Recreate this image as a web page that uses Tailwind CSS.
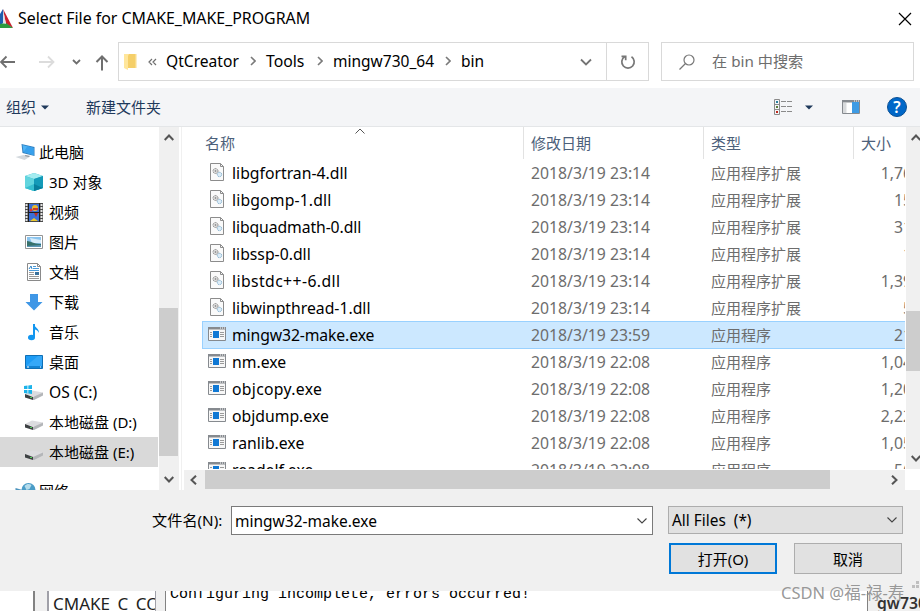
<!DOCTYPE html>
<html lang="zh-CN">

<head>
  <meta charset="UTF-8">
  <meta name="viewport" content="width=device-width, initial-scale=1.0">
  <title>Select File for CMAKE_MAKE_PROGRAM</title>
  <script src="https://cdn.jsdelivr.net/npm/@tailwindcss/browser@4"></script>
</head>

<body class="w-[920px] h-[611px] overflow-hidden bg-white text-black text-[15.75px] leading-5 whitespace-nowrap font-['Noto_Sans','Noto_Sans_CJK_SC',sans-serif]">
  <div class="flex flex-col h-[611px]">

    <!-- Title bar -->
    <header class="flex items-center h-[42px] shrink-0 pb-[5px]">
      <svg class="w-[14px] h-[20px] shrink-0" viewBox="0 0 14 20">
        <path d="M3 0 0 5v11L5 13z" fill="#1d5fae" />
        <path d="M3 0 13 19 6 15z" fill="#c9212e" />
        <path d="M0 15l6-1 7 5H0z" fill="#2c9a3f" />
        <path d="M3 1v13l3 1z" fill="#dfe3e8" />
      </svg>
      <h1 class="ml-1 pb-[2px] text-[15.9px]">Select File for CMAKE_MAKE_PROGRAM</h1>
      <svg class="ml-auto mr-[8px] w-[14px] h-[14px]" viewBox="0 0 14 14" fill="none" stroke="#000" stroke-width="1.2"><path d="M1 1l12 12M13 1 1 13" /></svg>
    </header>

    <!-- Navigation -->
    <nav class="flex h-[46px] shrink-0">
      <div class="flex items-center w-[118px] h-[39px] shrink-0">
        <svg class="w-[118px] h-[39px]" viewBox="0 0 118 39" fill="none" stroke="#6f6f6f" stroke-width="1.8">
          <path d="M15 20H1M6.500 14.500 1 20l5.500 5.500" />
          <path d="M39 20h14M48 14.500l5.500 5.500L48 25.500" stroke="#dcdcdc" />
          <path d="M73 18l3.500 3.500L80 18" />
          <path d="M102 28.500V14.500M96.500 20l5.500-5.500 5.500 5.500" stroke-width="2" />
        </svg>
      </div>
      <div class="flex w-[531px] h-[39px] border border-[#d9d9d9] shrink-0">
        <div class="flex items-center flex-1">
          <svg class="ml-[5px] w-[13px] h-[18px]" viewBox="0 0 13 18">
            <path d="M4 1h8v14H4z" fill="#f5cf69" />
            <path d="M0 1h5l-1 2v14L0 15z" fill="#ffe69b" />
            <path d="M11 1h1.500v14H11z" fill="#f9dc8a" />
          </svg>
          <svg class="ml-[11px] w-[9px] h-[8px]" viewBox="0 0 9 8" fill="none" stroke="#6f6f6f" stroke-width="1.200"><path d="M4 1 1 4l3 3M8 1 5 4l3 3" /></svg>
          <span class="ml-[9px] w-[84px] pb-[2px] text-[15.600px]">QtCreator</span>
          <svg class="w-[6px] h-[10px] mb-[2px]" viewBox="0 0 6 10" fill="none" stroke="#7a7a7a" stroke-width="1.600"><path d="M1 1l4 4-4 4" /></svg>
          <span class="ml-[10px] w-[51px] pb-[2px] text-[15.800px]">Tools</span>
          <svg class="w-[6px] h-[10px] mb-[2px]" viewBox="0 0 6 10" fill="none" stroke="#7a7a7a" stroke-width="1.600"><path d="M1 1l4 4-4 4" /></svg>
          <span class="ml-[10px] w-[112px] pb-[2px] text-[15.500px]">mingw730_64</span>
          <svg class="w-[6px] h-[10px] mb-[2px]" viewBox="0 0 6 10" fill="none" stroke="#7a7a7a" stroke-width="1.600"><path d="M1 1l4 4-4 4" /></svg>
          <span class="ml-[10px] pb-[2px] text-[15.500px]">bin</span>
          <svg class="ml-auto mr-[14px] w-[12px] h-[8px]" viewBox="0 0 12 8" fill="none" stroke="#747474" stroke-width="1.800"><path d="M1 1.500l5 5 5-5" /></svg>
        </div>
        <div class="flex items-center justify-center w-[42px] border-l border-[#d9d9d9]">
          <svg class="w-[16px] h-[16px]" viewBox="0 0 16 16" fill="none" stroke="#777" stroke-width="1.700"><path d="M11.500 2.800A6.200 6.200 0 1 1 4.500 2.800M1.500 2.300h4.200v4" /></svg>
        </div>
      </div>
      <div class="flex items-center ml-[12px] w-[253px] h-[39px] border border-[#d9d9d9] text-[#6d6d6d] shrink-0">
        <svg class="ml-[17px] w-[16px] h-[16px]" viewBox="0 0 16 16" fill="none" stroke="#777" stroke-width="1.200"><circle cx="10" cy="6" r="5" /><path d="M6.500 9.500.5 15.500" /></svg>
        <span class="ml-[17px] pb-[2px] text-[15.2px]">在 bin 中搜索</span>
      </div>
    </nav>

    <!-- Toolbar -->
    <div class="flex items-center h-[39px] shrink-0 bg-[#f4f5f7] border-b border-[#e4e6e8] text-[15px] text-[#1e395b]">
      <span class="ml-[6px] w-[30px]">组织</span>
      <svg class="ml-[5px] w-[8px] h-[5px]" viewBox="0 0 8 5"><path d="M0 .5h8L4 4.500z" fill="#1e395b" /></svg>
      <span class="ml-[37px]">新建文件夹</span>
      <svg class="ml-auto w-[18px] h-[16px]" viewBox="0 0 18 16" fill="none" stroke="#8a8a8a">
        <path d="M.5.5h5v15h-5zM.5 5.500h5M.5 10.500h5M7 2.500h5M13 2.500h5M7 7.500h5M13 7.500h5M7 12.500h5M13 12.500h5" />
        <path d="M2 3h2" stroke="#2a7f9e" stroke-width="2" /><path d="M2 8h2" stroke="#5b7d3a" stroke-width="2" /><path d="M2 13h2" stroke="#c0281c" stroke-width="2" />
      </svg>
      <svg class="ml-[13px] w-[8px] h-[5px]" viewBox="0 0 8 5"><path d="M0 .5h8L4 4.500z" fill="#1e395b" /></svg>
      <svg class="ml-[29px] w-[18px] h-[14px]" viewBox="0 0 18 14">
        <path d="M.5.5h17v13H.5z" fill="#fff" stroke="#868a8f" /><path d="M0 0h18v2.500H0z" fill="#868a8f" />
        <path d="M1 3h3.500v10H1z" fill="#d8dadc" /><path d="M10 2h7v11h-7z" fill="#3e9be4" /><path d="M12 1h1M14 1h1M16 1h1" stroke="#fff" />
      </svg>
      <span class="flex items-center justify-center ml-[27px] mr-[13px] w-[20px] h-[20px] rounded-full bg-[#0067c8] border border-[#0a4f94] text-white text-[16px] font-semibold">?</span>
    </div>

    <!-- Folder tree and file list -->
    <main class="flex h-[363px] shrink-0">
      <aside id="tree" class="w-[158px] h-[363px] pt-[10px] overflow-hidden shrink-0 text-[15px]"></aside>
      <div class="flex flex-col items-center ml-px w-[20px] bg-[#f0f0f0] shrink-0">
        <svg class="mt-[7px] mr-px w-[10px] h-[7px]" viewBox="0 0 10 7" fill="none" stroke="#555" stroke-width="2"><path d="M.7 6 5 1.500 9.300 6" /></svg>
        <div class="mt-[167px] mr-px w-[19px] h-[148px] bg-[#cdcdcd]"></div>
        <svg class="mt-auto mb-[7px] mr-px w-[10px] h-[7px]" viewBox="0 0 10 7" fill="none" stroke="#555" stroke-width="2"><path d="M.7 1 5 5.500 9.300 1" /></svg>
      </div>
      <div class="ml-[2px] w-px bg-[#f0f0f0] shrink-0"></div>

      <section class="flex flex-col ml-[2px] w-[736px] shrink-0">
        <div class="flex h-[342px] overflow-hidden">
          <div class="w-[721px] h-[342px] overflow-hidden shrink-0">
            <div class="relative flex h-[33px] text-[15px] text-[#4c607a] leading-[33px]">
              <div class="w-[339px] pl-[21px] shrink-0">名称</div>
              <div class="w-[180px] h-[32px] pl-[7px] border-l border-[#e2e2e2] shrink-0">修改日期</div>
              <div class="w-[150px] h-[32px] pl-[7px] border-l border-[#e2e2e2] shrink-0">类型</div>
              <div class="w-[52px] h-[32px] pl-[7px] border-l border-[#e2e2e2] shrink-0">大小</div>
              <svg class="absolute left-[171px] top-px w-[10px] h-[6px]" viewBox="0 0 10 6" fill="none" stroke="#555"><path d="M.5 5.500 5 1l4.500 4.500" /></svg>
            </div>
            <div id="files"></div>
          </div>
          <div class="flex flex-col ml-px w-[14px] bg-[#f0f0f0] shrink-0 overflow-hidden">
            <svg class="mt-[7px] ml-[5px] w-[10px] h-[7px] shrink-0" viewBox="0 0 10 7" fill="none" stroke="#555" stroke-width="2"><path d="M.7 6 5 1.500 9.300 6" /></svg>
            <div class="mt-[170px] h-[60px] bg-[#cdcdcd]"></div>
            <svg class="mt-auto mb-[7px] ml-[5px] w-[10px] h-[7px] shrink-0" viewBox="0 0 10 7" fill="none" stroke="#555" stroke-width="2"><path d="M.7 1 5 5.500 9.300 1" /></svg>
          </div>
        </div>
        <div class="flex items-center mt-px w-[721px] h-[20px] bg-[#f0f0f0]">
          <svg class="ml-[6px] w-[7px] h-[10px]" viewBox="0 0 7 10" fill="none" stroke="#555" stroke-width="2"><path d="M6 .7 1.500 5 6 9.300" /></svg>
          <div class="ml-[8px] mb-px w-[625px] h-[19px] bg-[#cdcdcd]"></div>
          <svg class="ml-auto mr-[7px] w-[7px] h-[10px]" viewBox="0 0 7 10" fill="none" stroke="#555" stroke-width="2"><path d="M1 .7 5.500 5 1 9.300" /></svg>
        </div>
      </section>
    </main>

    <!-- File name and buttons -->
    <footer class="relative flex flex-col h-[101px] pt-[16px] bg-[#f0f0f0] shrink-0">
      <div class="flex h-[29px]">
        <label class="w-[231px] pl-[152px] text-[15.2px] leading-[29px]">文件名(N):</label>
        <div class="flex items-center justify-between w-[422px] h-[29px] pl-[3px] pr-[5px] bg-white border border-[#7a7a7a]">
          <span class="text-[15.5px]">mingw32-make.exe</span>
          <svg class="w-[10px] h-[6px]" viewBox="0 0 10 6" fill="none" stroke="#444" stroke-width="1.100"><path d="M.5.5 5 5 9.500.5" /></svg>
        </div>
        <div class="flex items-center justify-between ml-[15px] w-[235px] h-[28px] pl-[3px] pr-[5px] bg-[#e1e1e1] border border-[#adadad]">
          <span class="pt-[2px] text-[15.4px]">All Files&nbsp; (*)</span>
          <svg class="w-[10px] h-[6px]" viewBox="0 0 10 6" fill="none" stroke="#444" stroke-width="1.100"><path d="M.5.5 5 5 9.500.5" /></svg>
        </div>
      </div>
      <div class="flex mt-[8px] ml-[669px] gap-[17px] text-[15px]">
        <button class="w-[108px] h-[31px] bg-[#e1e1e1] border-2 border-[#0078d7]">打开(O)</button>
        <button class="w-[108px] h-[31px] bg-[#e1e1e1] border border-[#adadad]">取消</button>
      </div>
      <svg class="absolute right-0 bottom-[2px] w-[8px] h-[8px]" viewBox="0 0 8 8" fill="#bfbfbf"><path d="M4 0h3v3H4zM0 4h3v3H0zM4 4h3v3H4z" /></svg>
    </footer>

    <!-- Window behind the dialog -->
    <div class="relative flex h-[20px] shrink-0 overflow-hidden">
      <div class="ml-[33px] w-[14px] bg-[#f0f0f0] border-l-2 border-[#828282] shrink-0"></div>
      <div class="w-[109px] pl-[4px] border-l-2 border-r border-[#a0a0a8] text-[17px] leading-[25px] text-[#222] overflow-hidden shrink-0">CMAKE_C_CO</div>
      <div class="w-[10px] bg-[#f0f0f0] border-r border-[#828282] shrink-0"></div>
      <div class="w-[701px] h-[20px] pl-[4px] font-['Liberation_Mono',monospace] text-[15px] leading-[8px] overflow-hidden shrink-0">Configuring incomplete, errors occurred!</div>
      <div class="w-[53px] pl-[9px] border-l border-[#828282] bg-[#f0f0f0] font-semibold leading-[24px] text-[#333] overflow-hidden shrink-0">gw730</div>
    </div>
  </div>

  <div class="absolute left-[781px] top-[583px] text-[16.5px] text-[#8c8c8c]/90">CSDN @福-禄-寿</div>

  <script>
    const disk = '<path d="M0 11l7-3.500 11 2-8 4.500z" fill="#dcdcdf"/><path d="M0 11l8 3v3l-8-2.500z" fill="#3d4143"/><path d="M8 14l10-4.500v3L9 17H8z" fill="#b4b6b9"/><path d="M5 14.500h2" stroke="#53d35a"/>';
    const icons = {
      pc: '<path d="M6 1l13 3v9L7 10z" fill="#2f7fc0"/><path d="M7 2l11 3v7L8 9z" fill="#4fb4f5"/><path d="M8 9l4-6 6 2v7z" fill="#37a0ec"/><path d="M0 14l8-2 6 2-5 3z" fill="#d3d8dd"/><path d="M10 12l5 1-2 1-4-1z" fill="#8f979e"/>',
      cube: '<path d="M9 0l9 3v12l-9 3-9-3V3z" fill="#2fb5cd"/><path d="M0 3l9-3 9 3-9 3z" fill="#a4ecf0"/><path d="M0 3l9 3v12l-9-3z" fill="#62d5de"/><path d="M9 6l9-3v12l-9 3z" fill="#149ab8"/><path d="M0 15l9-4v7z" fill="#37bfd0"/><path d="M9 11l9 4-9 3z" fill="#087f9d"/>',
      video: '<path d="M0 0h18v19H0z" fill="#4b4b4b"/><path d="M4 1h10v8H4zM4 10h10v8H4z" fill="#3a6fd8"/><path d="M1.500 1v17M16.500 1v17" stroke="#e4e4e4" stroke-width="2" stroke-dasharray="2 1"/><circle cx="10" cy="5" r="3" fill="#e9b92d"/><path d="M8 5h5v2H8z" fill="#c93a2b"/><circle cx="6" cy="7" r="1.500" fill="#d33"/><path d="M9 10h4l-2 4z" fill="#b9312a"/><path d="M5 18l4-3 4 3z" fill="#e9c62d"/><path d="M3.500 0v19M14.500 0v19M3 9.500h12" stroke="#1d1d1d"/>',
      picture: '<path d="M.5 2.500h17v13H.5z" fill="#fff" stroke="#949494"/><path d="M2 4h14v10H2z" fill="#8ac4ee"/><path d="M5 5l11 2v3H7z" fill="#d7ecfa"/><path d="M2 8c4 0 6 3 14 3v3H2z" fill="#37716b"/><path d="M2 13l14-1v2H2z" fill="#5b96b5"/>',
      doc: '<path d="M2.500.5h10l3 3v14h-13z" fill="#fff" stroke="#8a8a8a"/><path d="M12.500.5v3h3" fill="none" stroke="#8a8a8a"/><path d="M4 6l2-3 1 3" fill="none" stroke="#2f87cc"/><path d="M8 3.500h3M8 5.500h6M4 7.500h10" stroke="#4a9ad8"/><path d="M4 9.500h5M4 11.500h5M4 13.500h10M4 15.500h10" stroke="#999"/><path d="M10 9h4v3h-4z" fill="#39709c"/>',
      down: '<path d="M5 1h8v8h4.500L9 17.500.5 9H5z" fill="#3f97e6"/>',
      music: '<path d="M9 1c1 4 5 4 5 9-1-2-2-3-4-3.500V14" fill="#1296f0"/><path d="M8 1h2v13H8z" fill="#1296f0"/><ellipse cx="6.500" cy="14.500" rx="3.500" ry="2.700" fill="#1296f0"/>',
      desktop: '<path d="M.5 2.500h17v13H.5z" fill="#1d9cf5" stroke="#0f6fb5"/><path d="M1 13L13 3h4v10z" fill="#35a8f8"/><path d="M1 14h16" stroke="#0b6ab0"/><path d="M2 14h2M15 14h1" stroke="#fff"/>',
      os: disk + '<path d="M-1 3l3.500-.5v3.500h-3.500zM3.300 2.400 7 2v4H3.300zM-1 7h3.500v3.500L-1 10zM3.300 7H7v4l-3.700-.4z" fill="#1bb3ea"/>',
      disk: disk,
      network: '<circle cx="13" cy="8" r="7" fill="#4a9cc7"/><path d="M9 4c3-3 5-2 7-1l-2 4-3 1z" fill="#b5dcec"/><path d="M0 6l7 2v8l-7-2z" fill="#4d94bd"/>',
    };
    const tree = [
      ['pc', '此电脑'], ['cube', '3D 对象'], ['video', '视频'], ['picture', '图片'], ['doc', '文档'], ['down', '下载'],
      ['music', '音乐'], ['desktop', '桌面'], ['os', 'OS (C:)'], ['disk', '本地磁盘 (D:)'], ['disk', '本地磁盘 (E:)'], ['network', '网络'],
    ];
    document.getElementById('tree').innerHTML = tree.map(([icon, name], i) => {
      const root = icon === 'pc' || icon === 'network';
      let cls = root ? 'pl-[15px] gap-[5px]' : 'pl-[25px] gap-[6px]';
      if (i === 8) cls += ' text-[15.6px]';
      if (i === 10) cls += ' bg-[#d9d9d9]';
      if (i === 11) cls += ' mt-[9px]';
      const w = root ? 'w-[19px]' : 'w-[18px]';
      return `<div class="flex items-center h-[30px] ${cls}">
        <svg class="${w} h-[19px] shrink-0 overflow-visible" viewBox="0 0 18 19">${icons[icon]}</svg><span>${name}</span></div>`;
    }).join('');

    const dllIcon = '<path d="M.5.5h10l3 3v14H.5z" fill="#fafafa" stroke="#8c8c8c"/><path d="M10.500.5v3h3" fill="none" stroke="#8c8c8c"/><circle cx="5.500" cy="8" r="2.500" fill="#ddd" stroke="#858585" stroke-dasharray="1.200 .6"/><circle cx="5.500" cy="8" r=".8" fill="#777"/><circle cx="9.500" cy="11.500" r="2.200" fill="#dcecf7" stroke="#7daccb" stroke-dasharray="1.200 .6"/>';
    const exeIcon = '<path d="M.5.5h17v13H.5z" fill="#f7f7f7" stroke="#868a8f"/><path d="M0 0h18v2.500H0z" fill="#868a8f"/><path d="M12 1h1M14 1h1M16 1h1" stroke="#fff"/><path d="M5 4h6v7H5z" fill="#0f78d4"/><path d="M2 5.500h2M2 7.500h2M2 9.500h2M12 5.500h4M12 7.500h4M12 9.500h4" stroke="#9a9a9a"/>';
    const files = [
      ['libgfortran-4.dll', '23:14', '1,760 KB', ''],
      ['libgomp-1.dll', '23:14', '155 KB', 'tracking-[0.15px]'],
      ['libquadmath-0.dll', '23:14', '317 KB', 'tracking-[-0.1px]'],
      ['libssp-0.dll', '23:14', '17 KB', ''],
      ['libstdc++-6.dll', '23:14', '1,393 KB', 'tracking-[0.4px]'],
      ['libwinpthread-1.dll', '23:14', '51 KB', ''],
      ['mingw32-make.exe', '23:59', '217 KB', 'tracking-[-0.12px]'],
      ['nm.exe', '22:08', '1,044 KB', ''],
      ['objcopy.exe', '22:08', '1,206 KB', 'tracking-[0.3px]'],
      ['objdump.exe', '22:08', '2,223 KB', ''],
      ['ranlib.exe', '22:08', '1,055 KB', ''],
      ['readelf.exe', '22:08', '566 KB', ''],
    ];
    document.getElementById('files').innerHTML = files.map(([name, time, size, tracking], i) => {
      const dll = name.endsWith('.dll');
      const selected = i === 6;
      const row = selected ? 'h-[28px] -mt-px bg-[#cce8ff] border-y border-l border-[#99d1ff] pl-[5px]' : 'h-[27px] pl-[6px] pb-[2px]';
      const lift = selected ? 'mb-[3px]' : 'mb-px';
      const icon = dll
        ? `<svg class="ml-[2px] mr-[8px] ${lift} w-[14px] h-[18px] shrink-0" viewBox="0 0 14 18">${dllIcon}</svg>`
        : `<svg class="mr-[6px] ${lift} w-[18px] h-[14px] shrink-0" viewBox="0 0 18 14">${exeIcon}</svg>`;
      return `<div class="flex items-center ml-[18px] w-[703px] ${row}">${icon}
        <span class="w-[299px] shrink-0 ${tracking}">${name}</span>
        <span class="w-[180px] shrink-0 text-[#6d6d6d]">2018/3/19 ${time}</span>
        <span class="w-[150px] shrink-0 text-[15px] text-[#6d6d6d]">${dll ? '应用程序扩展' : '应用程序'}</span>
        <span class="w-[84px] shrink-0 text-right text-[#6d6d6d]">${size}</span></div>`;
    }).join('');
  </script>
</body>

</html>
